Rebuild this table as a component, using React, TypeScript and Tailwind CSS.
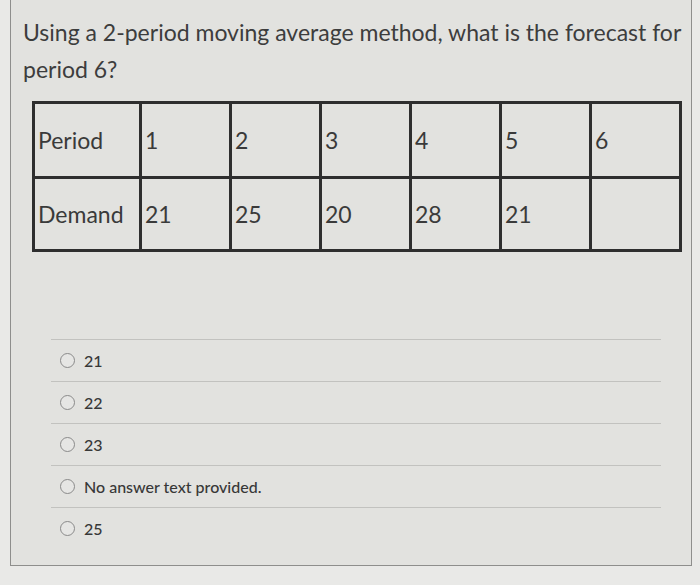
import React from "react";

// 题目数据
const periods = ["1", "2", "3", "4", "5", "6"];
const demand = ["21", "25", "20", "28", "21", ""];
const options = ["21", "22", "23", "No answer text provided.", "25"];

const App: React.FC = () => {
  return (
    <div
      className="w-[700px] h-[585px] overflow-hidden bg-[#e9e9e7] text-[#3b3b3b]"
      style={{ fontFamily: "Lato, 'Open Sans', sans-serif" }}
    >
      {/* 题目面板 */}
      <div className="ml-[10px] mr-[8px] h-[566px] border-l border-r border-b border-[#8e8e8c] bg-[#e2e2df]">
        <p className="pl-[12px] pt-[14px] whitespace-nowrap text-[23px] leading-[37px] text-[#3d3d3d]">
          Using a 2-period moving average method, what is the forecast for
          <br />
          period 6?
        </p>

        {/* 数据表 */}
        <table className="ml-[21px] mt-[13px] border-collapse border-[3px] border-[#2e2e2e] text-[23px] text-[#3a3a3a]">
          <tbody>
            <tr className="h-[75px]">
              <td className="w-[107px] border-[3px] border-[#2e2e2e] pl-[3px] align-middle">Period</td>
              {periods.map((p) => (
                <td key={p} className="w-[90px] border-[3px] border-[#2e2e2e] pl-[3px] align-middle">
                  {p}
                </td>
              ))}
            </tr>
            <tr className="h-[73px]">
              <td className="border-[3px] border-[#2e2e2e] pl-[3px] align-middle">Demand</td>
              {demand.map((d, i) => (
                <td key={i} className="border-[3px] border-[#2e2e2e] pl-[3px] align-middle">
                  {d}
                </td>
              ))}
            </tr>
          </tbody>
        </table>

        {/* 选项 */}
        <div className="ml-[40px] mr-[30px] mt-[87px]">
          {options.map((o) => (
            <div
              key={o}
              className="flex h-[42px] items-center gap-[9px] border-t border-[#c2c2bf] pl-[9px]"
            >
              <span className="h-[15px] w-[15px] rounded-full border-[1.5px] border-[#8a8a8a] bg-[#e6e6e4]"></span>
              <span className="text-[16px] font-medium text-[#383838]">{o}</span>
            </div>
          ))}
        </div>
      </div>
    </div>
  );
};

export default App;
